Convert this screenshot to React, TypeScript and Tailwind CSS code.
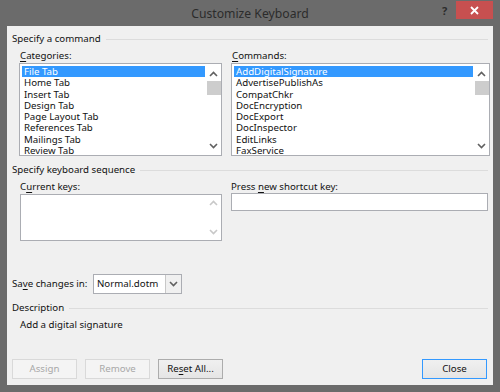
import React from "react";

const categories = [
  "File Tab",
  "Home Tab",
  "Insert Tab",
  "Design Tab",
  "Page Layout Tab",
  "References Tab",
  "Mailings Tab",
  "Review Tab",
];

const commands = [
  "AddDigitalSignature",
  "AdvertisePublishAs",
  "CompatChkr",
  "DocEncryption",
  "DocExport",
  "DocInspector",
  "EditLinks",
  "FaxService",
];

const Chevron: React.FC<{ up?: boolean; faded?: boolean }> = ({ up, faded }) => (
  <svg width="9" height="6" viewBox="0 0 9 6">
    <path
      d={up ? "M1 5 L4.5 1.5 L8 5" : "M1 1 L4.5 4.5 L8 1"}
      fill="none"
      stroke={faded ? "#c8c8c8" : "#606060"}
      strokeWidth="1.6"
    />
  </svg>
);

const Scrollbar: React.FC<{ faded?: boolean; thumb?: boolean }> = ({ faded, thumb }) => (
  <div className="w-[15px] flex flex-col items-center bg-white">
    <div className="h-[14px] flex items-center justify-center mt-[3px]">
      <Chevron up faded={faded} />
    </div>
    {thumb && <div className="w-[14px] h-[14px] bg-[#cdcdcd]" />}
    <div className="flex-1" />
    <div className="h-[14px] flex items-center justify-center mb-[2px]">
      <Chevron faded={faded} />
    </div>
  </div>
);

const ListBox: React.FC<{ items: string[] }> = ({ items }) => (
  <div className="h-[93px] border border-[#abadb3] bg-white flex">
    <div className="flex-1 pt-[2px] pl-[2px] pr-[1px]">
      {items.map((it, i) => (
        <div
          key={it}
          className={
            "h-[11.3px] leading-[11.3px] pl-[2px] text-[9.7px] whitespace-nowrap " +
            (i === 0 ? "bg-[#3399ff] text-white" : "text-[#111]")
          }
        >
          {it}
        </div>
      ))}
    </div>
    <Scrollbar thumb />
  </div>
);

const GroupHeader: React.FC<{ label: string }> = ({ label }) => (
  <div className="flex items-center h-[14px] pl-[5px] pr-[5px]">
    <span className="text-[9.7px] text-[#111] mr-[5px] whitespace-nowrap">{label}</span>
    <div className="flex-1 h-px bg-[#dcdcdc]" />
  </div>
);

const Btn: React.FC<{ children: React.ReactNode; disabled?: boolean; def?: boolean }> = ({
  children,
  disabled,
  def,
}) => (
  <div
    className={
      "w-[65px] h-[20px] flex items-center justify-center text-[9.7px] border " +
      (disabled
        ? "border-[#d9d9d9] bg-[#f4f4f4] text-[#a8a8a8]"
        : def
        ? "border-[#3399ff] bg-gradient-to-b from-[#f0f0f0] to-[#e5e5e5] text-[#111]"
        : "border-[#acacac] bg-gradient-to-b from-[#f0f0f0] to-[#e5e5e5] text-[#111]")
    }
  >
    {children}
  </div>
);

export default function App() {
  return (
    <div
      className="w-[500px] h-[392px] bg-[#6b6b6b] flex flex-col"
      style={{ fontFamily: "'Noto Sans', 'Open Sans', sans-serif" }}
    >
      {/* title bar */}
      <div className="h-[26px] flex items-start relative">
        <div className="flex-1 text-center text-[12.2px] leading-[27px] text-[#2b2b2b]">
          Customize Keyboard
        </div>
        <div className="absolute left-[442px] top-[3px] text-[11px] font-bold text-[#2b2b2b]">?</div>
        <div className="absolute left-[456px] top-[1px] w-[37px] h-[18px] bg-[#c75050] flex items-center justify-center">
          <svg width="9" height="9" viewBox="0 0 9 9">
            <path d="M1 1 L8 8 M8 1 L1 8" stroke="#fff" strokeWidth="1.8" />
          </svg>
        </div>
      </div>

      {/* client area */}
      <div className="mx-[7px] h-[359px] bg-[#f0f0f0] flex flex-col">
        <div className="h-[6px]" />
        <GroupHeader label="Specify a command" />

        <div className="flex mt-[3px] pl-[12px] pr-[3px] gap-[9px]">
          <div className="w-[203px] flex flex-col">
            <div className="h-[14px] leading-[14px] pl-[1px] text-[9.7px] text-[#111]">
              <u className="underline-offset-2">C</u>ategories:
            </div>
            <ListBox items={categories} />
          </div>
          <div className="flex-1 flex flex-col">
            <div className="h-[14px] leading-[14px] pl-[1px] text-[9.7px] text-[#111]">
              <u className="underline-offset-2">C</u>ommands:
            </div>
            <ListBox items={commands} />
          </div>
        </div>

        <div className="h-[7px]" />
        <GroupHeader label="Specify keyboard sequence" />

        <div className="flex mt-[3px] pl-[13px] pr-[5px] gap-[9px]">
          <div className="w-[202px] flex flex-col">
            <div className="h-[14px] leading-[14px] text-[9.7px] text-[#111]">
              C<u className="underline-offset-2">u</u>rrent keys:
            </div>
            <div className="h-[47px] border border-[#abadb3] bg-white flex">
              <div className="flex-1" />
              <div className="w-[15px] flex flex-col items-center">
                <div className="h-[12px] flex items-center mt-[2px]">
                  <Chevron up faded />
                </div>
                <div className="flex-1" />
                <div className="h-[12px] flex items-center mb-[2px]">
                  <Chevron faded />
                </div>
              </div>
            </div>
          </div>
          <div className="flex-1 flex flex-col">
            <div className="h-[14px] leading-[14px] text-[9.7px] text-[#111]">
              Press <u className="underline-offset-2">n</u>ew shortcut key:
            </div>
            <div className="h-[18px] border border-[#abadb3] bg-white -mt-px" />
          </div>
        </div>

        <div className="flex items-center mt-[33px] pl-[5px] h-[20px]">
          <span className="text-[9.7px] text-[#111] w-[81px] whitespace-nowrap">
            Sa<u className="underline-offset-2">v</u>e changes in:
          </span>
          <div className="w-[89px] h-[20px] border border-[#abadb3] bg-white flex">
            <div className="flex-1 pl-[3px] text-[9.7px] leading-[18px] text-[#111]">Normal.dotm</div>
            <div className="w-[16px] border-l border-[#c8c8c8] bg-[#f0f0f0] flex items-center justify-center">
              <Chevron />
            </div>
          </div>
        </div>

        <div className="h-[7px]" />
        <GroupHeader label="Description" />
        <div className="pl-[13px] mt-[3px] text-[9.7px] leading-[14px] text-[#111]">
          Add a digital signature
        </div>

        <div className="flex mt-[27px] pl-[5px] pr-[6px] gap-[8px]">
          <Btn disabled>Assign</Btn>
          <Btn disabled>Remove</Btn>
          <Btn>
            Re<u className="underline-offset-2">s</u>et All...
          </Btn>
          <div className="flex-1" />
          <Btn def>Close</Btn>
        </div>
      </div>
    </div>
  );
}
